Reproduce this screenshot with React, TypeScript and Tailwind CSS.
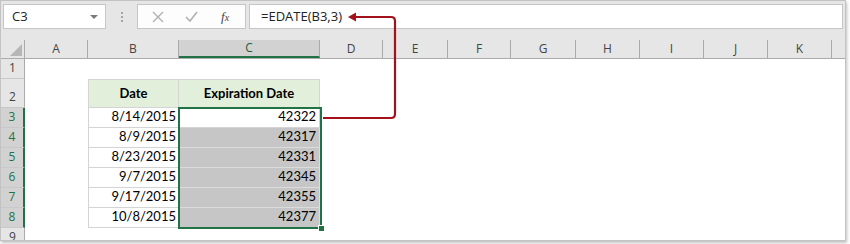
import React from "react"

const cols = [
  { l: "A", w: "w-[63px]" },
  { l: "B", w: "w-[91px]" },
  { l: "C", w: "w-[141px]" },
  { l: "D", w: "w-[63px]" },
  { l: "E", w: "w-[65px]" },
  { l: "F", w: "w-[63px]" },
  { l: "G", w: "w-[65px]" },
  { l: "H", w: "w-[64px]" },
  { l: "I", w: "w-[64px]" },
  { l: "J", w: "w-[64px]" },
  { l: "K", w: "w-[64px]" },
]

const data = [
  ["8/14/2015", "42322"],
  ["8/9/2015", "42317"],
  ["8/23/2015", "42331"],
  ["9/7/2015", "42345"],
  ["9/17/2015", "42355"],
  ["10/8/2015", "42377"],
]

const cellFont = "font-['Lato','Liberation_Sans',sans-serif] text-[13px] text-black"
const uiFont = "font-['Open_Sans','Noto_Sans',sans-serif]"

function RowHead({ n, selected, tall }: { n: number; selected?: boolean; tall?: boolean }) {
  return (
    <div
      className={`w-[24px] shrink-0 flex items-end justify-center pb-[1px] border-b border-[#c8c8c8] text-[12px] ${uiFont} ${
        tall ? "h-[29px]" : "h-[20px]"
      } ${
        selected
          ? "bg-[#d2d2d2] text-[#217346] border-r-2 border-r-[#217346]"
          : "bg-[#e6e6e6] text-[#444] border-r border-r-[#ababab]"
      }`}
    >
      {n}
    </div>
  )
}

export default function App() {
  return (
    <div className="w-[850px] h-[244px] bg-white">
      <div className="relative w-[846px] h-[241px] border border-[#c3c3c3] shadow-[1px_2px_3px_rgba(0,0,0,0.25)] overflow-hidden bg-white">
        {/* formula bar */}
        <div className={`h-[39px] bg-[#e6e6e6] flex items-start pt-[3px] pl-[2px] ${uiFont}`}>
          <div className="w-[103px] h-[25px] bg-white border border-[#c6c6c6] flex items-center justify-between pl-[8px] pr-[7px]">
            <span className="text-[13px] text-[#222]">C3</span>
            <svg width="8" height="4" viewBox="0 0 8 4">
              <path d="M0 0 L8 0 L4 4 Z" fill="#7a7a7a" />
            </svg>
          </div>
          <div className="w-[31px] h-[25px] flex flex-col items-center justify-center gap-[2px]">
            <span className="w-[2px] h-[2px] bg-[#a6a6a6]" />
            <span className="w-[2px] h-[2px] bg-[#a6a6a6]" />
            <span className="w-[2px] h-[2px] bg-[#a6a6a6]" />
          </div>
          <div className="w-[109px] h-[25px] bg-[#fdfdfd] border border-[#c6c6c6] flex items-center pl-[14px]">
            <svg width="12" height="12" viewBox="0 0 12 12" className="mr-[21px]">
              <path d="M1 1 L11 11 M11 1 L1 11" stroke="#b0b0b0" strokeWidth="1.4" />
            </svg>
            <svg width="13" height="11" viewBox="0 0 13 11" className="mr-[23px]">
              <path d="M1 6 L5 10 L12 1" stroke="#b0b0b0" strokeWidth="1.6" fill="none" />
            </svg>
            <span className="font-['Liberation_Serif',serif] italic text-[13px] text-[#444] leading-none">
              f<span className="text-[10px]">x</span>
            </span>
          </div>
          <div className="ml-[3px] w-[594px] h-[25px] bg-white border border-[#c6c6c6] flex items-center pl-[11px]">
            <span className="text-[13px] text-[#222]">=EDATE(B3,3)</span>
          </div>
        </div>

        {/* column headers */}
        <div className={`flex h-[19px] bg-[#e6e6e6] border-b border-[#ababab] text-[12px] text-[#444] ${uiFont}`}>
          <div className="w-[24px] shrink-0 border-r border-[#ababab] relative">
            <svg width="12" height="12" viewBox="0 0 12 12" className="absolute right-[2px] bottom-[2px]">
              <path d="M12 0 L12 12 L0 12 Z" fill="#b6b6b6" />
            </svg>
          </div>
          {cols.map((c) =>
            c.l === "C" ? (
              <div
                key={c.l}
                className={`${c.w} shrink-0 flex items-center justify-center bg-[#d2d2d2] border-r border-[#ababab] border-b-2 border-b-[#217346] text-[#1d5e3a]`}
              >
                {c.l}
              </div>
            ) : (
              <div key={c.l} className={`${c.w} shrink-0 flex items-center justify-center border-r border-[#ababab]`}>
                {c.l}
              </div>
            )
          )}
          <div className="flex-1" />
        </div>

        {/* sheet body */}
        <div className="relative">
          <div className="flex">
            <RowHead n={1} />
            <div className="flex-1" />
          </div>
          <div className="flex">
            <RowHead n={2} tall />
            <div className="w-[63px] shrink-0" />
            <div
              className={`w-[91px] h-[29px] shrink-0 bg-[#e2efda] border-t border-l border-r border-b border-[#d4d4d4] flex items-center justify-center font-bold ${cellFont}`}
            >
              Date
            </div>
            <div
              className={`w-[141px] h-[29px] shrink-0 bg-[#e2efda] border-t border-r border-b border-[#d4d4d4] flex items-center justify-center font-bold ${cellFont}`}
            >
              Expiration Date
            </div>
          </div>
          {data.map(([d, v], i) => (
            <div key={d} className="flex">
              <RowHead n={i + 3} selected />
              <div className="w-[63px] shrink-0" />
              <div
                className={`w-[91px] h-[20px] shrink-0 bg-white border-l border-r border-b border-[#d4d4d4] flex items-end justify-end pr-[2px] pb-[1px] ${cellFont}`}
              >
                {d}
              </div>
              <div
                className={`w-[141px] h-[20px] shrink-0 border-r border-b flex items-end justify-end pr-[3px] pb-[1px] ${cellFont} ${
                  i === 0 ? "bg-white border-[#d4d4d4]" : "bg-[#c6c6c6] border-[#dcdcdc]"
                }`}
              >
                {v}
              </div>
            </div>
          ))}
          <div className="flex">
            <RowHead n={9} />
            <div className="flex-1" />
          </div>

          {/* selection outline */}
          <div className="absolute left-[177px] top-[48px] w-[144px] h-[122px] border-2 border-[#217346] pointer-events-none">
            <div className="absolute -right-[5px] -bottom-[5px] w-[7px] h-[7px] bg-[#217346] border border-white" />
          </div>
        </div>

        {/* callout arrow */}
        <svg className="absolute left-0 top-0 pointer-events-none" width="846" height="241" viewBox="0 0 846 241">
          <path
            d="M322 117 L390 117 Q394 117 394 113 L394 20 Q394 16 390 16 L354 16"
            fill="none"
            stroke="#a3121b"
            strokeWidth="2.2"
          />
          <path d="M347 16 L355 11.5 L355 20.5 Z" fill="#a3121b" />
        </svg>
      </div>
    </div>
  )
}
